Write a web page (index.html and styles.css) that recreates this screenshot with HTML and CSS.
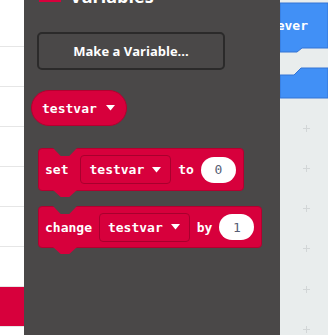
FILE: index.html
```html
<!DOCTYPE html>
<html lang="en">
<head>
    <meta charset="UTF-8">
    <meta name="viewport" content="width=device-width, initial-scale=1.0">
    <title>Variables</title>
    <link rel="stylesheet" href="styles.css">
</head>
<body>
    <div class="sidebar">
        <div class="row first"></div>
        <div class="row"></div>
        <div class="row"></div>
        <div class="row"></div>
        <div class="row"></div>
        <div class="row"></div>
        <div class="row"></div>
        <div class="row active"></div>
    </div>

    <div class="flyout">
        <div class="flyout-header">
            <span class="cat-icon"></span>
            <span class="cat-title">Variables</span>
        </div>

        <button class="make-btn">Make a Variable...</button>

        <div class="reporter">
            <span>testvar</span>
            <svg class="caret" width="9" height="6" viewBox="0 0 9 6"><polygon points="0,0 9,0 4.5,5.5" fill="#fff"/></svg>
        </div>

        <div class="block block-set">
            <span class="label">set</span>
            <div class="dropdown">
                <span>testvar</span>
                <svg class="caret" width="9" height="6" viewBox="0 0 9 6"><polygon points="0,0 9,0 4.5,5.5" fill="#fff"/></svg>
            </div>
            <span class="label">to</span>
            <div class="num">0</div>
        </div>

        <div class="block block-change">
            <span class="label">change</span>
            <div class="dropdown">
                <span>testvar</span>
                <svg class="caret" width="9" height="6" viewBox="0 0 9 6"><polygon points="0,0 9,0 4.5,5.5" fill="#fff"/></svg>
            </div>
            <span class="label">by</span>
            <div class="num">1</div>
        </div>
    </div>

    <div class="workspace">
        <svg width="48" height="335" viewBox="0 0 48 335">
            <!-- forever block, mostly hidden behind the flyout -->
            <path d="M0 3 H48 V48 H22 L17 52 H0 Z" fill="#4190f6" stroke="#3574d4" stroke-width="1"/>
            <path d="M0 75 H14 L21 68 H48 V98 H0 Z" fill="#4190f6" stroke="#3574d4" stroke-width="1"/>
            <text x="28" y="30" text-anchor="end" class="ws-text">forever</text>
            <!-- grid crosses -->
            <g stroke="#d2d6d7" stroke-width="1">
                <path d="M23 128.5 H30 M26.5 125 V132"/>
                <path d="M23 168.5 H30 M26.5 165 V172"/>
                <path d="M23 208.5 H30 M26.5 205 V212"/>
                <path d="M23 248.5 H30 M26.5 245 V252"/>
                <path d="M23 289.5 H30 M26.5 286 V293"/>
                <path d="M23 329.5 H30 M26.5 326 V333"/>
            </g>
        </svg>
    </div>
</body>
</html>
```

FILE: styles.css
```css
body {
    margin: 0;
    width: 328px;
    height: 335px;
    overflow: hidden;
    display: flex;
    font-family: "Open Sans", sans-serif;
    background: #ffffff;
}
.sidebar {
    width: 24px;
    flex-shrink: 0;
    background: #ffffff;
    display: flex;
    flex-direction: column;
}
.row {
    height: 39px;
    border-bottom: 1px solid #e6e6e6;
    flex-shrink: 0;
}
.row.first {
    height: 46px;
}
.row.active {
    background: #d7003c;
}
.flyout {
    width: 256px;
    flex-shrink: 0;
    background: #4a4848;
    display: flex;
    flex-direction: column;
    align-items: flex-start;
    overflow: hidden;
}
.flyout-header {
    display: flex;
    align-items: flex-end;
    height: 22px;
    margin-top: -17px;
    padding-left: 15px;
}
.cat-icon {
    width: 22px;
    height: 22px;
    background: #d7003c;
    margin-bottom: 3px;
}
.cat-title {
    margin-left: 9px;
    color: #ffffff;
    font-size: 18px;
    font-weight: 700;
    line-height: 18px;
}
.make-btn {
    margin: 27px 0 0 13px;
    width: 188px;
    height: 38px;
    background: #4a4848;
    border: 2px solid #2b2a2a;
    border-radius: 5px;
    color: #ffffff;
    font-family: "Open Sans", sans-serif;
    font-size: 13px;
    font-weight: 700;
    padding: 0;
}
.reporter,
.block,
.dropdown {
    display: flex;
    align-items: center;
    color: #ffffff;
    font-family: "DejaVu Sans Mono", monospace;
    font-size: 13px;
    font-weight: 700;
}
.reporter {
    margin: 20px 0 0 7px;
    height: 34px;
    padding: 0 11px 0 10px;
    gap: 9px;
    background: #d7003c;
    border: 1px solid #b3002f;
    border-radius: 18px;
}
.block {
    position: relative;
    margin-left: 14px;
    padding: 0 7px 0 6px;
    gap: 7px;
    background: #d7003c;
    border: 1px solid #b3002f;
    border-radius: 4px;
}
.block::before {
    content: "";
    position: absolute;
    top: -1px;
    left: 14px;
    width: 24px;
    height: 8px;
    background: #4a4848;
    clip-path: polygon(0 0, 100% 0, 68% 100%, 32% 100%);
}
.block::after {
    content: "";
    position: absolute;
    top: 100%;
    left: 14px;
    width: 24px;
    height: 7px;
    background: #d7003c;
    clip-path: polygon(0 0, 100% 0, 68% 100%, 32% 100%);
}
.block-set {
    margin-top: 22px;
    height: 41px;
}
.block-set .label:first-child {
    margin-right: 5px;
}
.block-change {
    margin-top: 15px;
    height: 40px;
}
.dropdown {
    height: 27px;
    padding: 0 9px 0 8px;
    gap: 8px;
    border: 1px solid #a8002d;
    border-radius: 4px;
}
.caret {
    display: block;
}
.num {
    width: 35px;
    height: 26px;
    border-radius: 13px;
    background: #ffffff;
    color: #575e75;
    font-weight: 400;
    display: flex;
    align-items: center;
    justify-content: center;
}
.workspace {
    width: 48px;
    flex-shrink: 0;
    background: #e9eded;
}
.workspace svg {
    display: block;
}
.ws-text {
    fill: #ffffff;
    font-family: "DejaVu Sans Mono", monospace;
    font-size: 13px;
    font-weight: 700;
}
```
